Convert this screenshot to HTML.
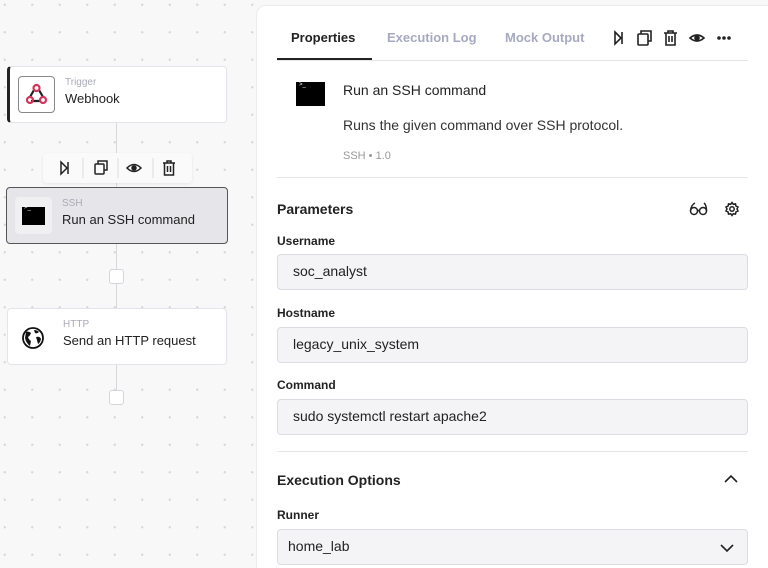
<!DOCTYPE html>
<html style="overflow:hidden;height:568px"><head><style>
*{box-sizing:border-box;margin:0;padding:0}
body{width:768px;height:568px;overflow:hidden;font-family:"Liberation Sans",sans-serif;background:#f8f8f9;position:relative;color:#222}
.grid{position:absolute;left:0;top:0;width:260px;height:568px;background-image:radial-gradient(circle,#d8d8dc 1px,transparent 1.3px);background-size:27.5px 27.5px;background-position:-9px -9px}
.abs{position:absolute}
.node{position:absolute;left:7px;width:220px;height:57px;background:#fff;border:1px solid #e4e4ea;border-radius:4px}
.node .sub{position:absolute;left:55px;top:10px;font-size:10px;color:#aaaab8}
.node .t{position:absolute;left:55px;top:24px;font-size:13px;color:#222}
.sq{position:absolute;left:109px;width:15px;height:15px;border:1px solid #d5d5db;border-radius:3px;background:#fff}
.panel{position:absolute;left:256px;top:5px;width:530px;height:563px;background:#fff;border-radius:10px 10px 0 0;border:1px solid #ececf0;border-bottom:none}
.lbl{position:absolute;left:277px;font-size:12px;font-weight:bold;color:#222}
.inp{position:absolute;left:277px;width:471px;height:36px;background:#f4f4f6;border:1px solid #dcdce2;border-radius:4px;font-size:14px;padding:8px 0 0 15px;color:#222}
.hr{position:absolute;left:277px;width:471px;height:1px;background:#e6e6ea}
.h{position:absolute;left:277px;font-size:14px;font-weight:bold}
</style></head><body>
<div class="grid"></div>
<div class="abs" style="left:116px;top:123px;width:1px;height:280px;background:#d8d8dc"></div>
<div class="node" style="top:66px;border-left:3px solid #222">
 <div class="abs" style="left:8px;top:9px;width:37px;height:37px;border:1px solid #888;border-radius:4px;background:#fff">
  <svg width="35" height="35" viewBox="0 0 35 35"><g fill="none" stroke="#222" stroke-width="2.2"><path d="M15 13 l-4 7 M20 13 l4 7 M12 24 h10"/></g><g fill="none" stroke="#d6335a" stroke-width="2.2"><circle cx="17.5" cy="11" r="3"/><circle cx="11" cy="23" r="3"/><circle cx="24" cy="23" r="3"/></g></svg>
 </div>
 <div class="sub">Trigger</div><div class="t">Webhook</div>
</div>
<div class="abs" style="left:43px;top:153px;width:149px;height:30px;background:#fafafb;border-radius:4px;box-shadow:0 1px 3px rgba(0,0,0,.08)">
 <svg width="149" height="30" viewBox="0 0 149 30" fill="none" stroke="#222" stroke-width="1.5">
  <path d="M18 9 L24 15 L18 21 Z M25 9 V21"/>
  <line x1="40" y1="5" x2="40" y2="25" stroke="#e6e6ea"/>
  <rect x="52" y="11" width="9" height="10" rx="1"/><path d="M55 11 V8 H64 V17 H61"/>
  <line x1="75" y1="5" x2="75" y2="25" stroke="#e6e6ea"/>
  <path d="M84 15 Q91 8 98 15 Q91 22 84 15Z"/><circle cx="91" cy="15" r="2" fill="#222"/>
  <line x1="110" y1="5" x2="110" y2="25" stroke="#e6e6ea"/>
  <path d="M120 10 H132 M124 10 V8 H128 V10 M121.5 10 V22 H130.5 V10 M124.5 13 V19 M127.5 13 V19"/>
 </svg>
</div>
<div class="node" style="top:187px;left:6px;width:222px;background:#e6e6ea;border:1px solid #555">
 <div class="abs" style="left:8px;top:9px;width:37px;height:37px;background:#f0f0f2;border-radius:4px"><div class="abs" style="left:7px;top:10px;width:23px;height:18px;background:#000"><span style="position:absolute;left:2px;top:-2px;color:#fff;font-size:6px">&gt;_</span></div></div>
 <div class="sub">SSH</div><div class="t">Run an SSH command</div>
</div>
<div class="sq" style="top:269px"></div>
<div class="node" style="top:308px">
 <svg class="abs" style="left:13px;top:17px" width="24" height="24" viewBox="0 0 24 24"><circle cx="12" cy="12" r="10" fill="none" stroke="#111" stroke-width="1.8"/><path d="M5 6 Q8 5 10 7 Q9 10 7 11 Q8 14 10 15 L9 20 Q5 17 4 12Z M13 4 Q16 4 18 6 Q16 8 14 7Z M15 11 Q19 10 20 13 Q19 17 17 18 Q16 14 15 11Z" fill="#111"/></svg>
 <div class="sub">HTTP</div><div class="t">Send an HTTP request</div>
</div>
<div class="sq" style="top:390px"></div>

<div class="panel"></div>
<div class="abs" style="left:291px;top:30px;font-size:13px;font-weight:bold">Properties</div>
<div class="abs" style="left:387px;top:30px;font-size:13px;font-weight:bold;color:#a7a9c0">Execution Log</div>
<div class="abs" style="left:505px;top:30px;font-size:13px;font-weight:bold;color:#a7a9c0">Mock Output</div>
<svg class="abs" style="left:610px;top:28px" width="130" height="20" viewBox="0 0 130 20" fill="none" stroke="#222" stroke-width="1.6">
 <path d="M5 4 L11 10 L5 16Z M12 4 V16"/>
 <rect x="28" y="6" width="10" height="11" rx="1"/><path d="M31 6 V3 H41 V13 H38"/>
 <path d="M54 5 H67 M58 5 V3 H63 V5 M56 5 V17 H65 V5 M59 8 V14 M62 8 V14"/>
 <path d="M80 10 Q87 4 94 10 Q87 16 80 10Z"/><circle cx="87" cy="10" r="2" fill="#222"/>
 <circle cx="109" cy="10" r="1" fill="#222"/><circle cx="114" cy="10" r="1" fill="#222"/><circle cx="119" cy="10" r="1" fill="#222"/>
</svg>
<div class="hr" style="top:60px"></div>
<div class="abs" style="left:277px;top:58px;width:95px;height:2px;background:#222"></div>
<div class="abs" style="left:296px;top:82px;width:29px;height:24px;background:#000"><span style="position:absolute;left:3px;top:0;color:#fff;font-size:6px">&gt;_</span></div>
<div class="abs" style="left:343px;top:82px;font-size:14px">Run an SSH command</div>
<div class="abs" style="left:343px;top:117px;font-size:14px;color:#333">Runs the given command over SSH protocol.</div>
<div class="abs" style="left:343px;top:150px;font-size:11px;color:#999">SSH • 1.0</div>
<div class="hr" style="top:177px"></div>
<div class="h" style="top:201px">Parameters</div>
<svg class="abs" style="left:689px;top:201px" width="20" height="16" viewBox="0 0 20 16" fill="none" stroke="#222" stroke-width="1.5"><circle cx="5" cy="10" r="3.5"/><circle cx="14" cy="10" r="3.5"/><path d="M8.5 10 Q9.5 9 10.5 10 M1.5 10 Q2 4 6 2 M17.5 10 Q17.5 4 15 2"/></svg>
<svg class="abs" style="left:724px;top:201px" width="16" height="16" viewBox="0 0 16 16" fill="none" stroke="#222" stroke-width="1.5"><circle cx="8" cy="8" r="2.2"/><path d="M8 1.5 L9.3 3.3 L11.5 2.9 L11.9 5 L14 6 L13 8 L14 10 L11.9 11 L11.5 13.1 L9.3 12.7 L8 14.5 L6.7 12.7 L4.5 13.1 L4.1 11 L2 10 L3 8 L2 6 L4.1 5 L4.5 2.9 L6.7 3.3Z"/></svg>
<div class="lbl" style="top:234px">Username</div>
<div class="inp" style="top:254px">soc_analyst</div>
<div class="lbl" style="top:306px">Hostname</div>
<div class="inp" style="top:327px">legacy_unix_system</div>
<div class="lbl" style="top:378px">Command</div>
<div class="inp" style="top:399px">sudo systemctl restart apache2</div>
<div class="hr" style="top:451px"></div>
<div class="h" style="top:472px">Execution Options</div>
<svg class="abs" style="left:724px;top:474px" width="14" height="10" viewBox="0 0 14 10"><path d="M1 8 L7 2 L13 8" fill="none" stroke="#222" stroke-width="1.6"/></svg>
<div class="lbl" style="top:508px">Runner</div>
<div class="inp" style="top:529px;padding-left:10px">home_lab</div>
<svg class="abs" style="left:720px;top:543px" width="14" height="10" viewBox="0 0 14 10"><path d="M1 2 L7 8 L13 2" fill="none" stroke="#222" stroke-width="1.6"/></svg>
</body></html>
